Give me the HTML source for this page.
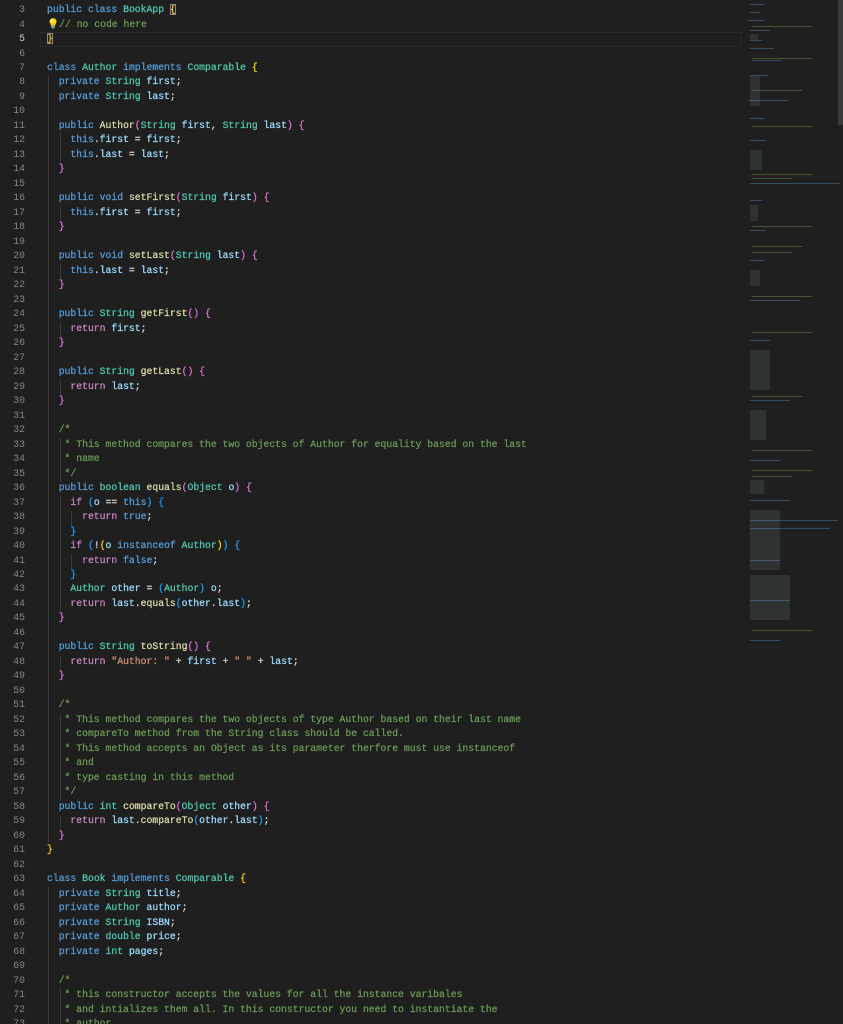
<!DOCTYPE html>
<html><head><meta charset="utf-8"><style>
html,body{margin:0;padding:0;background:#1f1f1f;width:843px;height:1024px;overflow:hidden}
#ed{position:relative;width:843px;height:1024px;font-family:"Liberation Mono",monospace;font-size:9.75px;color:#d4d4d4}
.l{position:absolute;left:0;height:14.49px;line-height:14.49px;white-space:pre;padding-left:47px;width:690px;-webkit-text-stroke:0.25px currentColor}
.n{position:absolute;left:0;width:25px;text-align:right;color:#858585;padding:0;-webkit-text-stroke:0}
.k{color:#569cd6}.t{color:#4ec9b0}.f{color:#dcdcaa}.v{color:#9cdcfe}.c{color:#6a9955}.p{color:#c586c0}.s{color:#ce9178}
.b1{color:#ffd700}.b2{color:#da70d6}.b3{color:#179fff}
.g{position:absolute;width:1px;background:#3a3a3a}
.box{outline:1px solid #888;outline-offset:-1px}
</style></head><body><div id="ed">
<div style="position:absolute;left:40px;top:32px;width:700px;height:13px;border:1px solid #2a2a2a"></div>
<div class="g" style="left:48px;top:75px;height:767px"></div>
<div class="g" style="left:60px;top:133px;height:29px"></div>
<div class="g" style="left:60px;top:206px;height:15px"></div>
<div class="g" style="left:60px;top:264px;height:15px"></div>
<div class="g" style="left:60px;top:322px;height:15px"></div>
<div class="g" style="left:60px;top:380px;height:15px"></div>
<div class="g" style="left:60px;top:438px;height:44px"></div>
<div class="g" style="left:60px;top:496px;height:116px"></div>
<div class="g" style="left:71px;top:511px;height:15px"></div>
<div class="g" style="left:71px;top:554px;height:15px"></div>
<div class="g" style="left:60px;top:656px;height:15px"></div>
<div class="g" style="left:60px;top:714px;height:87px"></div>
<div class="g" style="left:60px;top:815px;height:15px"></div>
<div class="g" style="left:48px;top:887px;height:140px"></div>
<div class="g" style="left:60px;top:988px;height:40px"></div>
<div class="l" style="top:3px"><span class="n">3</span><span class="k">public</span> <span class="k">class</span> <span class="t">BookApp</span> <span class="b1 box">{</span></div>
<div class="l" style="top:17.5px"><span class="n">4</span><span style="color:#ffcc00">💡</span><span class="c">// no code here</span></div>
<div class="l" style="top:32px"><span class="n" style="color:#c6c6c6">5</span><span class="b1 box">}</span></div>
<div class="l" style="top:46.5px"><span class="n">6</span></div>
<div class="l" style="top:61px"><span class="n">7</span><span class="k">class</span> <span class="t">Author</span> <span class="k">implements</span> <span class="t">Comparable</span> <span class="b1">{</span></div>
<div class="l" style="top:75.4px"><span class="n">8</span>  <span class="k">private</span> <span class="t">String</span> <span class="v">first</span>;</div>
<div class="l" style="top:89.9px"><span class="n">9</span>  <span class="k">private</span> <span class="t">String</span> <span class="v">last</span>;</div>
<div class="l" style="top:104.4px"><span class="n">10</span></div>
<div class="l" style="top:118.9px"><span class="n">11</span>  <span class="k">public</span> <span class="f">Author</span><span class="b2">(</span><span class="t">String</span> <span class="v">first</span>, <span class="t">String</span> <span class="v">last</span><span class="b2">)</span> <span class="b2">{</span></div>
<div class="l" style="top:133.4px"><span class="n">12</span>    <span class="k">this</span>.<span class="v">first</span> = <span class="v">first</span>;</div>
<div class="l" style="top:147.9px"><span class="n">13</span>    <span class="k">this</span>.<span class="v">last</span> = <span class="v">last</span>;</div>
<div class="l" style="top:162.4px"><span class="n">14</span>  <span class="b2">}</span></div>
<div class="l" style="top:176.8px"><span class="n">15</span></div>
<div class="l" style="top:191.3px"><span class="n">16</span>  <span class="k">public</span> <span class="k">void</span> <span class="f">setFirst</span><span class="b2">(</span><span class="t">String</span> <span class="v">first</span><span class="b2">)</span> <span class="b2">{</span></div>
<div class="l" style="top:205.8px"><span class="n">17</span>    <span class="k">this</span>.<span class="v">first</span> = <span class="v">first</span>;</div>
<div class="l" style="top:220.3px"><span class="n">18</span>  <span class="b2">}</span></div>
<div class="l" style="top:234.8px"><span class="n">19</span></div>
<div class="l" style="top:249.3px"><span class="n">20</span>  <span class="k">public</span> <span class="k">void</span> <span class="f">setLast</span><span class="b2">(</span><span class="t">String</span> <span class="v">last</span><span class="b2">)</span> <span class="b2">{</span></div>
<div class="l" style="top:263.8px"><span class="n">21</span>    <span class="k">this</span>.<span class="v">last</span> = <span class="v">last</span>;</div>
<div class="l" style="top:278.2px"><span class="n">22</span>  <span class="b2">}</span></div>
<div class="l" style="top:292.7px"><span class="n">23</span></div>
<div class="l" style="top:307.2px"><span class="n">24</span>  <span class="k">public</span> <span class="t">String</span> <span class="f">getFirst</span><span class="b2">()</span> <span class="b2">{</span></div>
<div class="l" style="top:321.7px"><span class="n">25</span>    <span class="p">return</span> <span class="v">first</span>;</div>
<div class="l" style="top:336.2px"><span class="n">26</span>  <span class="b2">}</span></div>
<div class="l" style="top:350.7px"><span class="n">27</span></div>
<div class="l" style="top:365.2px"><span class="n">28</span>  <span class="k">public</span> <span class="t">String</span> <span class="f">getLast</span><span class="b2">()</span> <span class="b2">{</span></div>
<div class="l" style="top:379.6px"><span class="n">29</span>    <span class="p">return</span> <span class="v">last</span>;</div>
<div class="l" style="top:394.1px"><span class="n">30</span>  <span class="b2">}</span></div>
<div class="l" style="top:408.6px"><span class="n">31</span></div>
<div class="l" style="top:423.1px"><span class="n">32</span><span class="c">  /*</span></div>
<div class="l" style="top:437.6px"><span class="n">33</span><span class="c">   * This method compares the two objects of Author for equality based on the last</span></div>
<div class="l" style="top:452.1px"><span class="n">34</span><span class="c">   * name</span></div>
<div class="l" style="top:466.6px"><span class="n">35</span><span class="c">   */</span></div>
<div class="l" style="top:481px"><span class="n">36</span>  <span class="k">public</span> <span class="t">boolean</span> <span class="f">equals</span><span class="b2">(</span><span class="t">Object</span> <span class="v">o</span><span class="b2">)</span> <span class="b2">{</span></div>
<div class="l" style="top:495.5px"><span class="n">37</span>    <span class="p">if</span> <span class="b3">(</span><span class="v">o</span> == <span class="k">this</span><span class="b3">)</span> <span class="b3">{</span></div>
<div class="l" style="top:510px"><span class="n">38</span>      <span class="p">return</span> <span class="k">true</span>;</div>
<div class="l" style="top:524.5px"><span class="n">39</span>    <span class="b3">}</span></div>
<div class="l" style="top:539px"><span class="n">40</span>    <span class="p">if</span> <span class="b3">(</span>!<span class="b1">(</span><span class="v">o</span> <span class="k">instanceof</span> <span class="t">Author</span><span class="b1">)</span><span class="b3">)</span> <span class="b3">{</span></div>
<div class="l" style="top:553.5px"><span class="n">41</span>      <span class="p">return</span> <span class="k">false</span>;</div>
<div class="l" style="top:568px"><span class="n">42</span>    <span class="b3">}</span></div>
<div class="l" style="top:582.4px"><span class="n">43</span>    <span class="t">Author</span> <span class="v">other</span> = <span class="b3">(</span><span class="t">Author</span><span class="b3">)</span> <span class="v">o</span>;</div>
<div class="l" style="top:596.9px"><span class="n">44</span>    <span class="p">return</span> <span class="v">last</span>.<span class="f">equals</span><span class="b3">(</span><span class="v">other</span>.<span class="v">last</span><span class="b3">)</span>;</div>
<div class="l" style="top:611.4px"><span class="n">45</span>  <span class="b2">}</span></div>
<div class="l" style="top:625.9px"><span class="n">46</span></div>
<div class="l" style="top:640.4px"><span class="n">47</span>  <span class="k">public</span> <span class="t">String</span> <span class="f">toString</span><span class="b2">()</span> <span class="b2">{</span></div>
<div class="l" style="top:654.9px"><span class="n">48</span>    <span class="p">return</span> <span class="s">"Author: "</span> + <span class="v">first</span> + <span class="s">" "</span> + <span class="v">last</span>;</div>
<div class="l" style="top:669.4px"><span class="n">49</span>  <span class="b2">}</span></div>
<div class="l" style="top:683.8px"><span class="n">50</span></div>
<div class="l" style="top:698.3px"><span class="n">51</span><span class="c">  /*</span></div>
<div class="l" style="top:712.8px"><span class="n">52</span><span class="c">   * This method compares the two objects of type Author based on their last name</span></div>
<div class="l" style="top:727.3px"><span class="n">53</span><span class="c">   * compareTo method from the String class should be called.</span></div>
<div class="l" style="top:741.8px"><span class="n">54</span><span class="c">   * This method accepts an Object as its parameter therfore must use instanceof</span></div>
<div class="l" style="top:756.3px"><span class="n">55</span><span class="c">   * and</span></div>
<div class="l" style="top:770.8px"><span class="n">56</span><span class="c">   * type casting in this method</span></div>
<div class="l" style="top:785.2px"><span class="n">57</span><span class="c">   */</span></div>
<div class="l" style="top:799.7px"><span class="n">58</span>  <span class="k">public</span> <span class="t">int</span> <span class="f">compareTo</span><span class="b2">(</span><span class="t">Object</span> <span class="v">other</span><span class="b2">)</span> <span class="b2">{</span></div>
<div class="l" style="top:814.2px"><span class="n">59</span>    <span class="p">return</span> <span class="v">last</span>.<span class="f">compareTo</span><span class="b3">(</span><span class="v">other</span>.<span class="v">last</span><span class="b3">)</span>;</div>
<div class="l" style="top:828.7px"><span class="n">60</span>  <span class="b2">}</span></div>
<div class="l" style="top:843.2px"><span class="n">61</span><span class="b1">}</span></div>
<div class="l" style="top:857.7px"><span class="n">62</span></div>
<div class="l" style="top:872.2px"><span class="n">63</span><span class="k">class</span> <span class="t">Book</span> <span class="k">implements</span> <span class="t">Comparable</span> <span class="b1">{</span></div>
<div class="l" style="top:886.6px"><span class="n">64</span>  <span class="k">private</span> <span class="t">String</span> <span class="v">title</span>;</div>
<div class="l" style="top:901.1px"><span class="n">65</span>  <span class="k">private</span> <span class="t">Author</span> <span class="v">author</span>;</div>
<div class="l" style="top:915.6px"><span class="n">66</span>  <span class="k">private</span> <span class="t">String</span> <span class="v">ISBN</span>;</div>
<div class="l" style="top:930.1px"><span class="n">67</span>  <span class="k">private</span> <span class="t">double</span> <span class="v">price</span>;</div>
<div class="l" style="top:944.6px"><span class="n">68</span>  <span class="k">private</span> <span class="t">int</span> <span class="v">pages</span>;</div>
<div class="l" style="top:959.1px"><span class="n">69</span></div>
<div class="l" style="top:973.6px"><span class="n">70</span><span class="c">  /*</span></div>
<div class="l" style="top:988px"><span class="n">71</span><span class="c">   * this constructor accepts the values for all the instance varibales</span></div>
<div class="l" style="top:1002.5px"><span class="n">72</span><span class="c">   * and intializes them all. In this constructor you need to instantiate the</span></div>
<div class="l" style="top:1017px"><span class="n">73</span><span class="c">   * author</span></div>
<svg style="position:absolute;left:746px;top:0" width="97" height="1024">
<rect x="92" y="0" width="5" height="125" fill="#3a3a3a"/>
<g fill="#4a6a8a" opacity="0.6">
<rect x="4" y="4" width="14" height="1"/><rect x="4" y="12" width="10" height="1"/><rect x="2" y="20" width="16" height="1"/><rect x="4" y="30" width="20" height="1"/>
<rect x="4" y="40" width="12" height="1"/><rect x="4" y="48" width="24" height="1"/><rect x="6" y="60" width="30" height="1"/><rect x="4" y="75" width="18" height="1"/>
<rect x="2" y="100" width="40" height="1"/><rect x="4" y="118" width="14" height="1"/><rect x="4" y="140" width="16" height="1"/><rect x="4" y="183" width="90" height="1"/>
<rect x="4" y="200" width="12" height="1"/><rect x="4" y="230" width="16" height="1"/><rect x="4" y="260" width="14" height="1"/><rect x="4" y="300" width="50" height="1"/>
<rect x="4" y="340" width="20" height="1"/><rect x="4" y="400" width="40" height="1"/><rect x="4" y="460" width="30" height="1"/><rect x="4" y="500" width="40" height="1"/>
<rect x="4" y="520" width="88" height="1"/><rect x="4" y="528" width="80" height="1"/><rect x="4" y="560" width="30" height="1"/><rect x="4" y="600" width="40" height="1"/><rect x="4" y="640" width="30" height="1"/>
</g>
<g fill="#6a9955" opacity="0.45">
<rect x="6" y="26" width="60" height="1"/><rect x="6" y="58" width="60" height="1"/><rect x="6" y="90" width="50" height="1"/><rect x="6" y="126" width="60" height="1"/><rect x="6" y="174" width="60" height="1"/><rect x="6" y="178" width="40" height="1"/>
<rect x="6" y="226" width="60" height="1"/><rect x="6" y="246" width="50" height="1"/><rect x="6" y="252" width="40" height="1"/><rect x="6" y="296" width="60" height="1"/><rect x="6" y="332" width="60" height="1"/>
<rect x="6" y="396" width="50" height="1"/><rect x="6" y="450" width="60" height="1"/><rect x="6" y="470" width="60" height="1"/><rect x="6" y="476" width="40" height="1"/><rect x="6" y="630" width="60" height="1"/>
</g>
<g fill="#7a8a8a" opacity="0.18">
<rect x="4" y="34" width="8" height="6"/><rect x="4" y="76" width="10" height="30"/><rect x="4" y="150" width="12" height="20"/><rect x="4" y="205" width="8" height="16"/><rect x="4" y="270" width="10" height="16"/><rect x="4" y="350" width="20" height="40"/>
<rect x="4" y="410" width="16" height="30"/><rect x="4" y="480" width="14" height="14"/><rect x="4" y="510" width="30" height="60"/><rect x="4" y="575" width="40" height="45"/>
</g>
</svg>
</div></body></html>
